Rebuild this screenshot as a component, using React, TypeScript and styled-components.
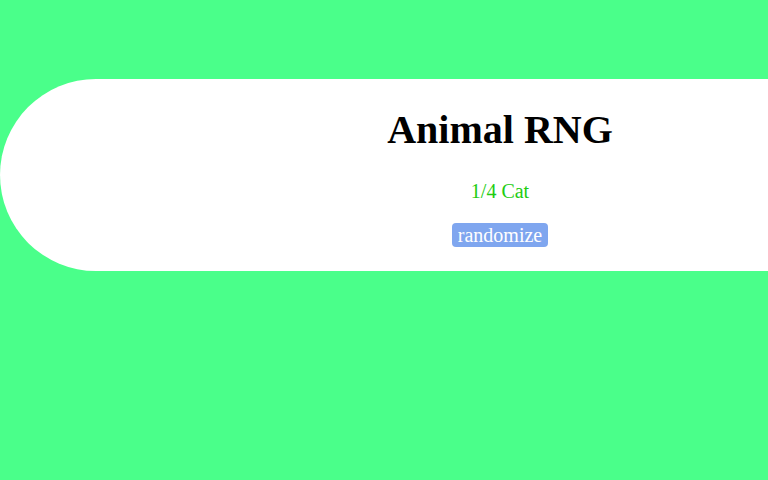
import React, { useState } from 'react'
import styled, { createGlobalStyle } from 'styled-components'

const ANIMALS = ['Cat', 'Dog', 'Bird', 'Fish']

const GlobalStyle = createGlobalStyle`
  html,
  body {
    margin: 0;
    padding: 0;
    background: #4aff8a;
    overflow: hidden;
    font-family: 'Liberation Serif', 'Times New Roman', serif;
  }
`

const Page = styled.div`
  width: 768px;
  height: 480px;
  padding-top: 79px;
  box-sizing: border-box;
`

const Card = styled.div`
  width: 1000px;
  height: 192px;
  box-sizing: border-box;
  background: #ffffff;
  border-radius: 96px 0 0 96px;
  padding-top: 28px;
  display: flex;
  flex-direction: column;
  align-items: center;
`

const Title = styled.h1`
  margin: 0;
  font-size: 40px;
  line-height: 46px;
  font-weight: bold;
  color: #000000;
`

const Result = styled.p`
  margin: 27px 0 0;
  font-size: 20px;
  line-height: 23px;
  color: #22cc11;
`

const RandomButton = styled.button`
  margin-top: 20px;
  padding: 0 6px;
  height: 24px;
  border: none;
  border-radius: 4px;
  background: #7fa6ef;
  color: #ffffff;
  font-family: inherit;
  font-size: 20px;
  line-height: 24px;
  cursor: pointer;
`

export default function App() {
  const [index, setIndex] = useState(0)

  return (
    <>
      <GlobalStyle />
      <Page>
        <Card>
          <Title>Animal RNG</Title>
          <Result>
            1/{ANIMALS.length} {ANIMALS[index]}
          </Result>
          <RandomButton onClick={() => setIndex(Math.floor(Math.random() * ANIMALS.length))}>
            randomize
          </RandomButton>
        </Card>
      </Page>
    </>
  )
}
